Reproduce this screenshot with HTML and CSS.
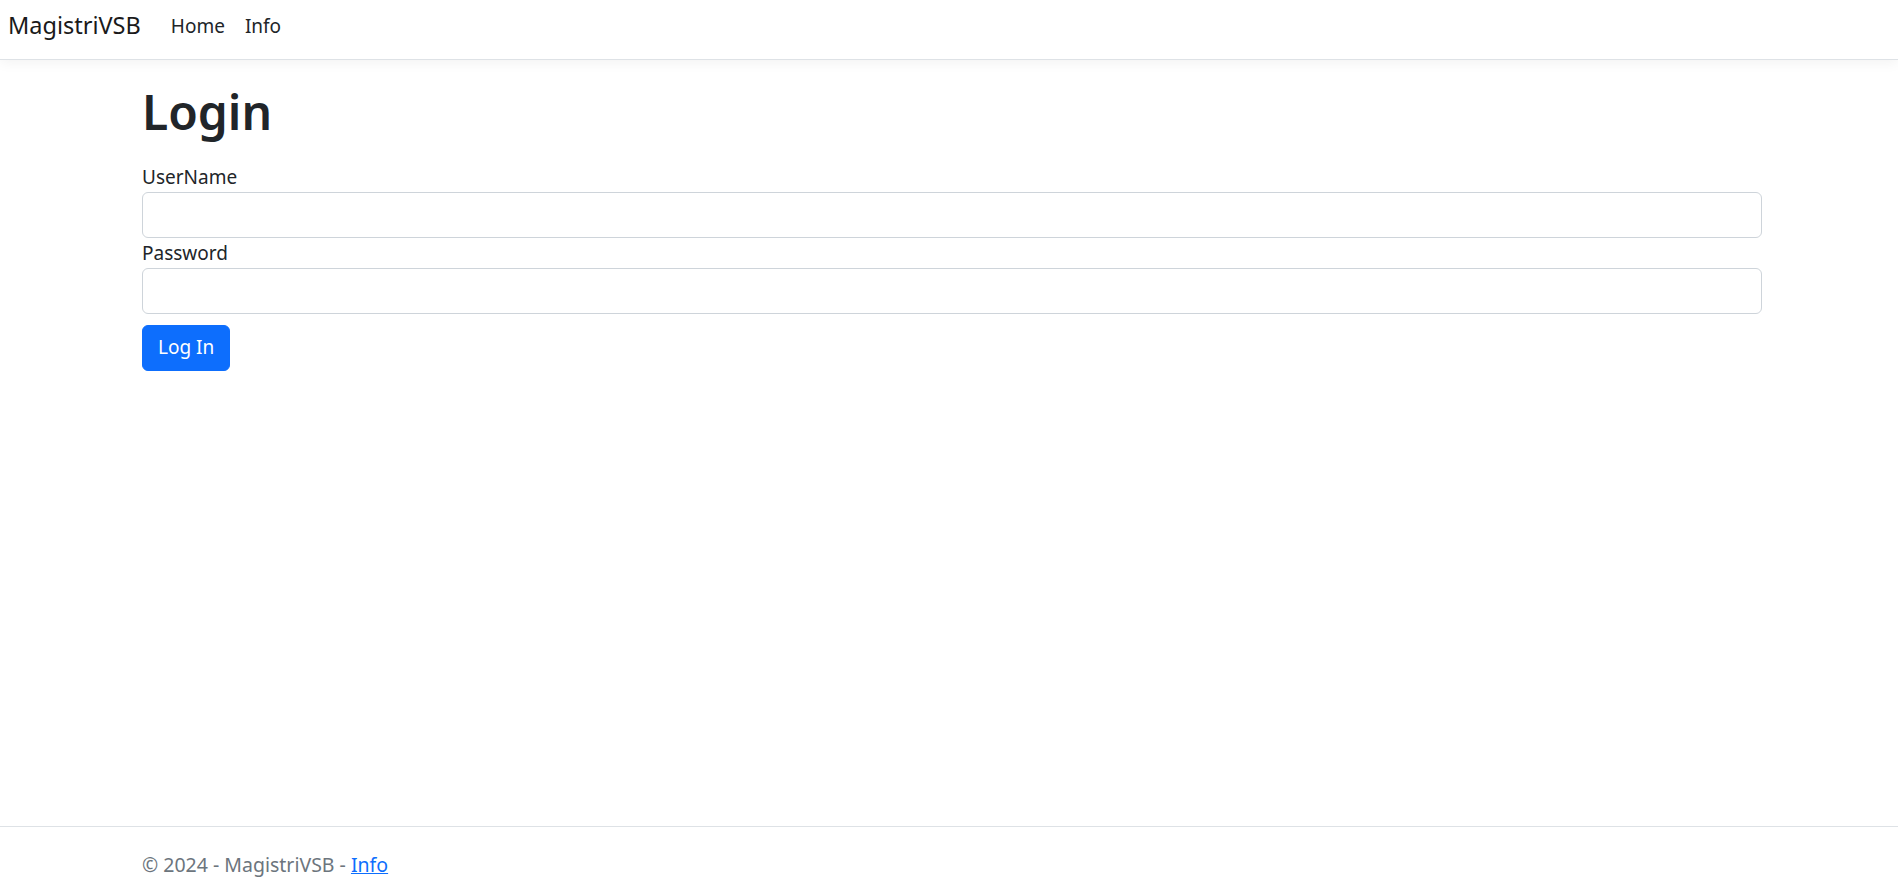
FILE: index.html
```html
<!DOCTYPE html>
<html lang="en">
<head>
<meta charset="utf-8">
<title>Login - MagistriVSB</title>
<link rel="stylesheet" href="styles.css">
</head>
<body>
<header class="site-header">
  <nav class="navbar">
    <a class="brand" href="#">MagistriVSB</a>
    <ul class="nav-list">
      <li><a class="nav-link" href="#">Home</a></li>
      <li><a class="nav-link" href="#">Info</a></li>
    </ul>
  </nav>
</header>
<main class="container">
  <h1 class="page-title">Login</h1>
  <form class="login-form">
    <label class="form-label" for="user">UserName</label>
    <input class="form-control" id="user" type="text">
    <label class="form-label" for="pass">Password</label>
    <input class="form-control" id="pass" type="password">
    <button class="btn-primary" type="button">Log In</button>
  </form>
</main>
<footer class="site-footer">
  <div class="container footer-inner">&copy; 2024 - MagistriVSB - <a class="footer-link" href="#">Info</a></div>
</footer>
</body>
</html>
```
FILE: styles.css
```css
* { box-sizing: border-box; }
html, body { margin: 0; padding: 0; }
body {
  font-family: "Noto Sans", "Open Sans", sans-serif;
  font-size: 19px;
  line-height: 1.5;
  color: #212529;
  background: #fff;
  min-height: 100vh;
  display: flex;
  flex-direction: column;
}
.site-header {
  background: #fff;
  border-bottom: 1px solid #dee2e6;
  box-shadow: 0 3px 12px rgba(0,0,0,0.05);
}
.navbar {
  height: 59px;
  display: flex;
  align-items: center;
  padding: 0 8px 7px;
}
.brand {
  font-size: 23.5px;
  color: #1a1a1a;
  text-decoration: none;
  margin-right: 20px;
  line-height: 1;
}
.nav-list {
  list-style: none;
  margin: 0;
  padding: 0;
  display: flex;
}
.nav-link {
  display: block;
  padding: 0 10px;
  color: #212529;
  text-decoration: none;
  font-size: 19px;
}
.container {
  width: 1620px;
  margin-left: 142px;
}
main.container { flex: 1; padding-top: 23px; }
.page-title {
  font-size: 48px;
  font-weight: 600;
  line-height: 1.2;
  margin: 0 0 21px;
}
.login-form {
  display: flex;
  flex-direction: column;
  align-items: flex-start;
}
.form-label {
  font-size: 19px;
  line-height: 30px;
  display: block;
}
.form-control {
  width: 100%;
  height: 46px;
  border: 1px solid #ced4da;
  border-radius: 6px;
  padding: 7px 15px;
  font: inherit;
}
.btn-primary {
  margin-top: 11px;
  height: 46px;
  padding: 0 15px;
  background: #0d6efd;
  border: 1px solid #0d6efd;
  color: #fff;
  border-radius: 6px;
  font: inherit;
  font-size: 19px;
}
.site-footer {
  border-top: 1px solid #dee2e6;
  height: 69px;
  display: flex;
  align-items: center;
  color: #6c757d;
}
.footer-inner { font-size: 19.5px; padding-top: 8px; }
.footer-link { color: #0d6efd; text-decoration: underline; }
```
